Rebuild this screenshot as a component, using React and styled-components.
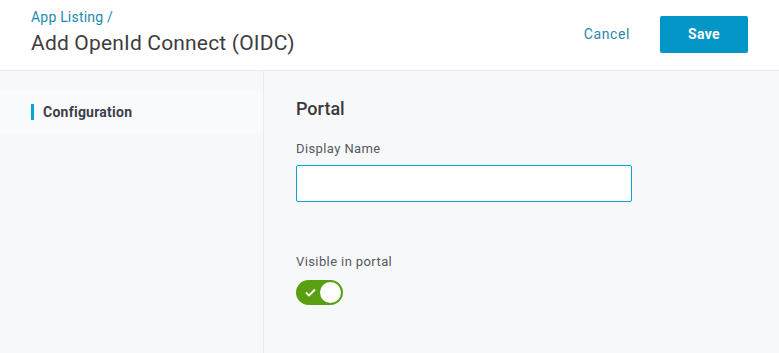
import React from "react";
import styled, { createGlobalStyle } from "styled-components";

const Global = createGlobalStyle`
  html, body { margin: 0; padding: 0; background: #f7f8fa; }
  body { font-family: Roboto, "Noto Sans", Arial, sans-serif; }
  * { box-sizing: border-box; }
`;

const Page = styled.div`
  width: 779px;
  height: 353px;
  display: flex;
  flex-direction: column;
  background: #f7f8fa;
  overflow: hidden;
`;

const Header = styled.header`
  height: 71px;
  flex: none;
  background: #ffffff;
  border-bottom: 1px solid #e6e9ed;
  display: flex;
  align-items: center;
  justify-content: space-between;
  padding: 0 31px 0 31px;
`;

const TitleBlock = styled.div`
  display: flex;
  flex-direction: column;
  margin-top: -6px;
`;

const Crumb = styled.a`
  font-size: 14px;
  color: #1b8bb4;
  line-height: 18px;
  letter-spacing: 0.2px;
  text-decoration: none;
`;

const Title = styled.h1`
  margin: 4px 0 0;
  font-size: 21px;
  font-weight: 400;
  color: #3d3d3d;
  line-height: 26px;
  letter-spacing: 0.18px;
`;

const Actions = styled.div`
  display: flex;
  align-items: center;
  gap: 30px;
  margin-top: -2px;
`;

const TextButton = styled.button`
  background: none;
  border: none;
  font-family: inherit;
  font-size: 14px;
  letter-spacing: 0.6px;
  color: #2a88a9;
  padding: 0;
  cursor: pointer;
`;

const PrimaryButton = styled.button`
  width: 88px;
  height: 37px;
  background: #0295c6;
  border: none;
  border-radius: 2px;
  color: #ffffff;
  font-family: inherit;
  font-size: 14px;
  font-weight: 700;
  letter-spacing: 0.3px;
  cursor: pointer;
`;

const Body = styled.div`
  flex: 1;
  display: flex;
`;

const Sidebar = styled.nav`
  width: 264px;
  flex: none;
  border-right: 1px solid #e9ebee;
  padding-top: 20px;
`;

const NavItem = styled.div`
  height: 42px;
  display: flex;
  align-items: center;
  padding-left: 31px;
  background: ${(p) => (p.$active ? "#fafbfc" : "transparent")};
`;

const NavBar = styled.span`
  width: 3px;
  height: 16px;
  background: #0aa3d8;
  margin-right: 9px;
`;

const NavLabel = styled.span`
  font-size: 14px;
  font-weight: 700;
  color: #3b404a;
  letter-spacing: 0.25px;
`;

const Main = styled.main`
  flex: 1;
  padding: 26px 0 0 32px;
`;

const SectionTitle = styled.h2`
  margin: 0;
  font-size: 18px;
  font-weight: 500;
  color: #3a3a3a;
  line-height: 24px;
`;

const Field = styled.div`
  display: flex;
  flex-direction: column;
  margin-top: ${(p) => p.$gap}px;
`;

const Label = styled.label`
  font-size: 13px;
  color: #555a60;
  line-height: 16px;
  letter-spacing: 0.4px;
`;

const Input = styled.input`
  margin-top: 8px;
  width: 336px;
  height: 37px;
  border: 1px solid #0aa3d8;
  border-radius: 2px;
  background: #fff;
  outline: none;
  font-family: inherit;
  font-size: 14px;
  padding: 0 10px;
`;

const Toggle = styled.button`
  margin-top: 10px;
  width: 47px;
  height: 25px;
  border-radius: 13px;
  border: none;
  background: #5a9e12;
  position: relative;
  padding: 0;
  cursor: pointer;
`;

const Knob = styled.span`
  position: absolute;
  right: 2px;
  top: 2px;
  width: 21px;
  height: 21px;
  border-radius: 50%;
  background: #fff;
`;

const Check = styled.svg`
  position: absolute;
  left: 9px;
  top: 8px;
`;

export default function App() {
  return (
    <>
      <Global />
      <Page>
        <Header>
          <TitleBlock>
            <Crumb>App Listing /</Crumb>
            <Title>Add OpenId Connect (OIDC)</Title>
          </TitleBlock>
          <Actions>
            <TextButton>Cancel</TextButton>
            <PrimaryButton>Save</PrimaryButton>
          </Actions>
        </Header>
        <Body>
          <Sidebar>
            <NavItem $active>
              <NavBar />
              <NavLabel>Configuration</NavLabel>
            </NavItem>
          </Sidebar>
          <Main>
            <SectionTitle>Portal</SectionTitle>
            <Field $gap={20}>
              <Label>Display Name</Label>
              <Input />
            </Field>
            <Field $gap={52}>
              <Label>Visible in portal</Label>
              <Toggle aria-pressed="true">
                <Check width="11" height="9" viewBox="0 0 11 9">
                  <path d="M1 4.5 L4 7.5 L10 1.5" stroke="#fff" strokeWidth="1.8" fill="none" />
                </Check>
                <Knob />
              </Toggle>
            </Field>
          </Main>
        </Body>
      </Page>
    </>
  );
}
